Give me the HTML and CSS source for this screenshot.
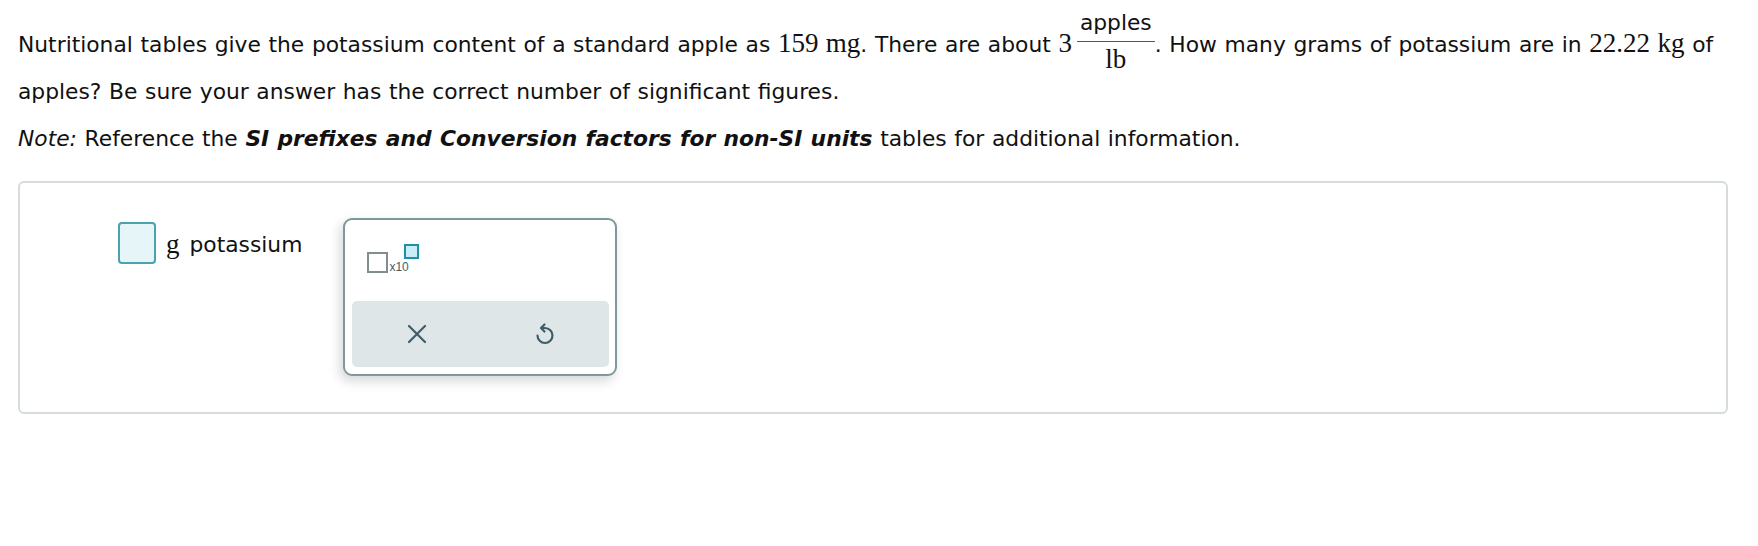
FILE: index.html
```html
<!DOCTYPE html>
<html lang="en">
<head>
    <meta charset="UTF-8">
    <title>Potassium in apples</title>
    <link rel="stylesheet" href="styles.css">
</head>
<body>
    <div class="page">
        <div class="question">
            <p>Nutritional tables give the potassium content of a standard apple as <span class="math">159 mg</span>. There are about <span class="math">3</span><span class="frac"><span class="num">apples</span><span class="den">lb</span></span>. How many grams of potassium are in <span class="math">22.22 kg</span> of<br>apples? Be sure your answer has the correct number of significant figures.</p>
            <p><em>Note:</em> Reference the <strong><em>SI prefixes and Conversion factors for non-SI units</em></strong> tables for additional information.</p>
        </div>

        <div class="answer-box">
            <div class="answer">
                <span class="input"></span>
                <span class="unit">g</span>
                <span class="unit-name">potassium</span>
            </div>

            <div class="keypad">
                <div class="keypad-top">
                    <div class="sci">
                        <span class="sci-base"></span>
                        <span class="sci-x">x10</span>
                        <span class="sci-exp"></span>
                    </div>
                </div>
                <div class="keypad-actions">
                    <button class="action" title="Clear">
                        <svg width="20" height="20" viewBox="0 0 20 20">
                            <path d="M2 2 L18 18 M18 2 L2 18" stroke="#3f5d68" stroke-width="2.2" stroke-linecap="round" fill="none"/>
                        </svg>
                    </button>
                    <button class="action" title="Undo">
                        <svg width="22" height="24" viewBox="0 0 22 24">
                            <path d="M8 6 H11 A7.5 7.5 0 1 1 3.5 13.5" stroke="#3f5d68" stroke-width="2.2" stroke-linecap="round" fill="none"/>
                            <path d="M10.5 2.5 L7 6 L10.5 9.5" stroke="#3f5d68" stroke-width="2.2" stroke-linecap="round" stroke-linejoin="round" fill="none"/>
                        </svg>
                    </button>
                </div>
            </div>
        </div>
    </div>
</body>
</html>
```

FILE: styles.css
```css
body {
    margin: 0;
    font-family: "DejaVu Sans", Verdana, sans-serif;
    font-size: 21.8px;
    word-spacing: 0.7px;
    color: #111;
    background: #fff;
}

.page {
    padding: 20px 0 0 18px;
}

.question p {
    margin: 0;
    line-height: 47px;
    white-space: nowrap;
}

.math {
    font-family: "Liberation Serif", "Times New Roman", serif;
    font-size: 27px;
}

.frac {
    display: inline-block;
    vertical-align: -16px;
    margin: -10px 0 -4px 5px;
    text-align: center;
}

.num {
    display: block;
    line-height: 22px;
    padding: 0 3px 7px;
    border-bottom: 1.5px solid #555;
}

.den {
    display: block;
    font-family: "Liberation Serif", "Times New Roman", serif;
    font-size: 27px;
    line-height: 24px;
    padding-top: 5px;
}

.answer-box {
    margin: 19px 30px 0 0;
    border: 2px solid #d6dcde;
    border-radius: 6px;
    padding: 35px 0 36px 98px;
    display: flex;
    align-items: flex-start;
}

.answer {
    display: flex;
    align-items: center;
    margin-top: 4px;
}

.input {
    width: 34px;
    height: 38px;
    border: 2px solid #4aa1af;
    border-radius: 4px;
    background: #e6f5f8;
}

.unit {
    font-family: "Liberation Serif", "Times New Roman", serif;
    font-size: 27px;
    margin-left: 10px;
    margin-top: 2px;
}

.unit-name {
    margin-left: 10px;
    margin-top: 2px;
}

.keypad {
    margin-left: 41px;
    width: 257px;
    padding: 7px 6px 7px 7px;
    border: 2px solid #7f979d;
    border-radius: 9px;
    background: #fff;
    box-shadow: -3px 5px 12px rgba(0, 0, 0, 0.16);
}

.keypad-top {
    height: 74px;
    padding: 17px 0 0 15px;
    box-sizing: border-box;
}

.sci {
    display: flex;
    align-items: flex-end;
    height: 29px;
}

.sci-base {
    width: 17px;
    height: 17px;
    border: 2px solid #838d90;
}

.sci-x {
    font-family: "Liberation Sans", Arial, sans-serif;
    font-size: 12px;
    line-height: 12px;
    word-spacing: 0;
    color: #3f5d68;
    margin-left: 1px;
}

.sci-exp {
    align-self: flex-start;
    width: 11px;
    height: 11px;
    border: 2px solid #1e91a6;
    background: #c9eef5;
    margin-left: -5px;
}

.keypad-actions {
    display: flex;
    height: 66px;
    background: #dfe6e8;
    border-radius: 5px;
}

.action {
    flex: 1;
    border: none;
    background: none;
    padding: 0;
    display: flex;
    align-items: center;
    justify-content: center;
    cursor: pointer;
}
```
